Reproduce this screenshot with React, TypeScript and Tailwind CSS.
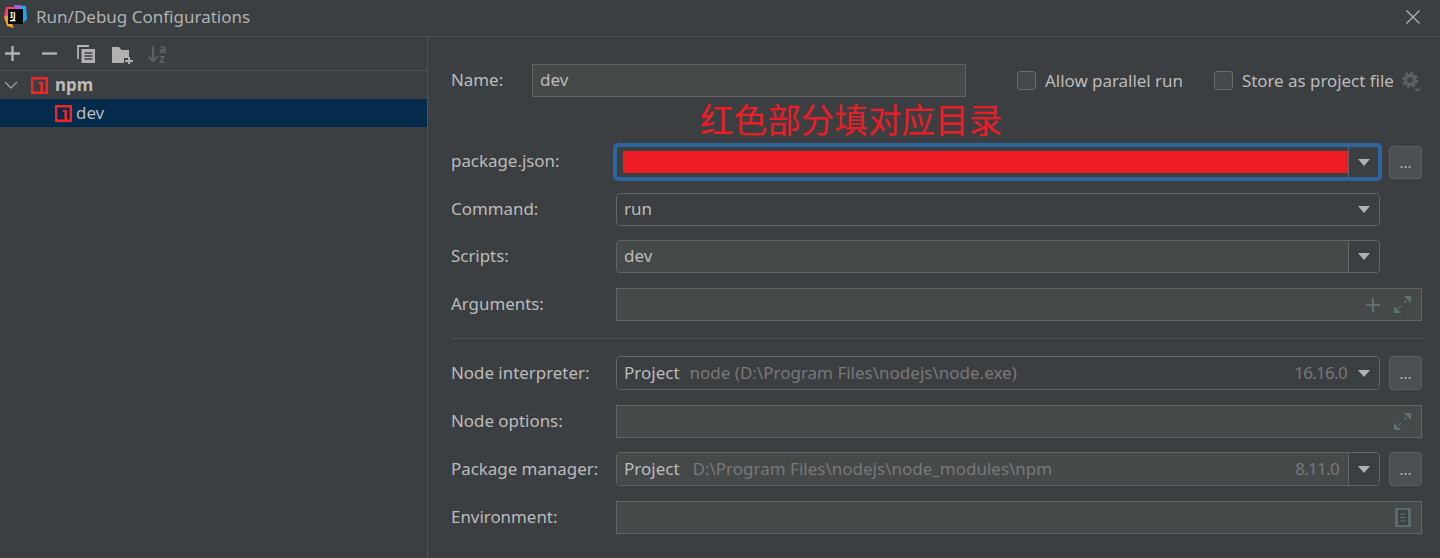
import type { ReactNode } from "react";

const FONT = "font-['Noto_Sans','Noto_Sans_CJK_SC',sans-serif]";

function NpmIcon({ className }: { className: string }) {
  return (
    <svg viewBox="0 0 17 17" className={className}>
      <path d="M1.200 1.200h14.600v14.600H1.200z" fill="none" stroke="#f2262a" strokeWidth="2.400" />
      <path d="M7.500 5H12v11H9.500V6.800h-2z" fill="#f2262a" />
    </svg>
  );
}

function Arrow() {
  return (
    <svg viewBox="0 0 12 7" className="w-[12px] h-[7px]">
      <path d="M0 0h12L6 7z" fill="#aeb0b2" />
    </svg>
  );
}

function Expand() {
  return (
    <svg viewBox="0 0 17 17" className="w-[17px] h-[17px]">
      <path d="M10 0h7v7zM0 10l7 7H0z" fill="#5f7073" />
      <path d="M12.500 4.500L10 7M4.500 12.500L7 10" stroke="#5f7073" strokeWidth="1.300" fill="none" />
    </svg>
  );
}

function Row({ label, mt, tall, children }: { label: string; mt: string; tall?: boolean; children: ReactNode }) {
  return (
    <div className={`flex items-center ${mt}`}>
      <div className={`w-[165px] shrink-0 text-[#bbbbbb] ${tall ? "" : "pb-[2px]"}`}>{label}</div>
      {children}
    </div>
  );
}

function Dots({ h, ml = "ml-[9px]" }: { h: string; ml?: string }) {
  return (
    <button className={`${ml} ${h} w-[33px] rounded-[4px] border border-[#5e6060] bg-[#4c5052] text-[#bbbbbb] text-[15px] leading-[28px] shrink-0`}>
      ...
    </button>
  );
}

function Combo({ children, split, tall }: { children?: ReactNode; split?: boolean; tall?: boolean }) {
  return (
    <div className={`w-[764px] ${tall ? "h-[34px]" : "h-[33px]"} flex border border-[#646464] rounded-[4px] overflow-hidden shrink-0`}>
      <div className={`flex-1 min-w-0 flex items-center pl-[7px] text-[17px] text-[#bbbbbb] ${tall ? "" : "pb-[2px]"} ${split ? "bg-[#45494a]" : "bg-[#3c3f41]"}`}>
        {children}
      </div>
      <div className={`w-[31px] flex items-center justify-center bg-[#3c3f41] ${split ? "border-l border-[#646464]" : ""}`}>
        <Arrow />
      </div>
    </div>
  );
}

function TextField({ children }: { children?: ReactNode }) {
  return (
    <div className="w-[806px] h-[33px] flex items-center justify-end gap-[14px] pr-[10px] border border-[#646464] bg-[#45494a] shrink-0">
      {children}
    </div>
  );
}

function Check({ label, cls }: { label: string; cls: string }) {
  return (
    <div className={`flex items-center gap-[9px] ${cls}`}>
      <span className="w-[19px] h-[19px] rounded-[3px] border border-[#6b6b6b] bg-[#43494a]" />
      <span className="text-[#bbbbbb]">{label}</span>
    </div>
  );
}

export default function App() {
  return (
    <div className={`w-[1440px] h-[558px] overflow-hidden bg-[#3c3f41] text-[16.900px] leading-[24px] ${FONT}`}>
      <div className="h-[37px] flex items-center border-b border-[#515151] pl-[4px] pr-[20px] pb-[2px]">
        <svg viewBox="0 0 23 23" className="w-[23px] h-[23px] mb-[2px]">
          <path d="M2 2h10L4 14 0 12z" fill="#fc3a6e" />
          <path d="M10 0l12 1 1 13-5 5z" fill="#1ea7e9" />
          <path d="M0 12l4-2 6 13-7-2z" fill="#f9a01b" />
          <path d="M10 1l8-1-6 8z" fill="#c74fe0" />
          <rect x="4" y="4" width="15" height="15" fill="#0a0a0a" />
          <text x="6" y="12.500" fontSize="8" fill="#ffffff" fontWeight="700">IJ</text>
          <rect x="6" y="15" width="5.500" height="1.300" fill="#ffffff" />
        </svg>
        <span className="ml-[9px] text-[17px] text-[#afb1b3]">Run/Debug Configurations</span>
        <svg viewBox="0 0 14 14" className="w-[14px] h-[14px] ml-auto" stroke="#b4b6b8" strokeWidth="1.200">
          <path d="M.5 .5l13 13M13.500 .5l-13 13" />
        </svg>
      </div>

      <div className="flex h-[521px]">
        <div className="w-[428px] shrink-0 border-r border-[#515151]">
          <div className="h-[34px] flex items-center border-b border-[#515151] pl-[5px]">
            <svg viewBox="0 0 15 15" className="w-[15px] h-[15px]">
              <path d="M0 7.500h15M7.500 0v15" stroke="#afb1b3" strokeWidth="2.400" />
            </svg>
            <svg viewBox="0 0 15 15" className="w-[15px] h-[15px] ml-[22px]">
              <path d="M0 7.500h15" stroke="#afb1b3" strokeWidth="2.400" />
            </svg>
            <svg viewBox="0 0 18 18" className="w-[18px] h-[18px] ml-[20px]" fill="none">
              <path d="M1 14V1h11" stroke="#afb1b3" strokeWidth="1.800" />
              <path d="M4.500 4H18v14H4.500z" fill="#afb1b3" />
              <path d="M7.500 8h8M7.500 11h8M7.500 14h8" stroke="#3c3f41" strokeWidth="1.300" />
            </svg>
            <svg viewBox="0 0 21 17" className="w-[21px] h-[17px] ml-[17px] mt-[3px]">
              <path d="M0 0h7l2.500 3H17v8h-5v5H0z" fill="#afb1b3" />
              <path d="M13 14h8M17 10v8" stroke="#afb1b3" strokeWidth="2.200" />
            </svg>
            <div className="ml-[15px] flex items-center">
              <svg viewBox="0 0 10 17" className="w-[10px] h-[17px] mt-[2px]" fill="none">
                <path d="M5 0v15M.7 10.500L5 15l4.300-4.500" stroke="#5f6264" strokeWidth="2" />
              </svg>
              <div className="flex flex-col ml-[1px] text-[12px] leading-[9.500px] font-bold text-[#5f6264]">
                <span>a</span>
                <span>z</span>
              </div>
            </div>
          </div>
          <div className="h-[28px] flex items-center pl-[4px]">
            <svg viewBox="0 0 14 8" className="w-[14px] h-[8px]" fill="none">
              <path d="M1 1l6 6 6-6" stroke="#9a9c9e" strokeWidth="1.400" />
            </svg>
            <NpmIcon className="w-[17px] h-[17px] ml-[13px]" />
            <span className="ml-[7px] pb-[1px] font-bold text-[#bbbbbb]">npm</span>
          </div>
          <div className="h-[28px] flex items-center bg-[#042a4c] pl-[55px]">
            <NpmIcon className="w-[17px] h-[17px]" />
            <span className="ml-[4px] pb-[1px] text-[#bbbbbb]">dev</span>
          </div>
        </div>

        <div className="flex-1 pl-[23px] pt-[27px]">
          <div className="flex items-center">
            <div className="w-[81px] pb-[2px] text-[#bbbbbb]">Name:</div>
            <div className="w-[434px] h-[33px] flex items-center pl-[7px] pb-[2px] border border-[#646464] bg-[#45494a] text-[17px] text-[#bbbbbb]">
              dev
            </div>
            <Check label="Allow parallel run" cls="ml-[51px]" />
            <Check label="Store as project file" cls="ml-[31px]" />
            <svg viewBox="0 0 20 20" className="w-[20px] h-[20px] ml-[8px] mt-[3px]" fill="none">
              <circle cx="8" cy="8" r="4.500" stroke="#5c5f61" strokeWidth="3.400" />
              <circle cx="8" cy="8" r="7" stroke="#5c5f61" strokeWidth="2.400" strokeDasharray="3.200 2.300" />
              <path d="M12 16.500h7l-3.500 3.500z" fill="#5c5f61" />
            </svg>
          </div>

          <div className="h-[46px] flex items-center pl-[249px] text-[33.600px] text-[#ee1c25] whitespace-nowrap">
            红色部分填对应目录
          </div>

          <div className="flex items-center">
            <div className="w-[162px] shrink-0 pb-[2px] text-[#bbbbbb]">package.json:</div>
            <div className="w-[769px] h-[38px] flex items-stretch border-[4px] border-[#2f659f] rounded-[5px] shrink-0 bg-[#3c3f41]">
              <div className="flex-1 my-[4px] ml-[6px] bg-[#ee1c25]" />
              <div className="w-[30px] flex items-center justify-center bg-[#3c3f41] border-l border-[#646464]">
                <Arrow />
              </div>
            </div>
            <Dots h="h-[33px]" ml="ml-[7px]" />
          </div>

          <Row label="Command:" mt="mt-[12px]">
            <Combo>run</Combo>
          </Row>
          <Row label="Scripts:" mt="mt-[14px]">
            <Combo split>dev</Combo>
          </Row>
          <Row label="Arguments:" mt="mt-[15px]">
            <TextField>
              <svg viewBox="0 0 14 14" className="w-[14px] h-[14px]">
                <path d="M0 7h14M7 0v14" stroke="#5f7073" strokeWidth="2.200" />
              </svg>
              <Expand />
            </TextField>
          </Row>

          <div className="mt-[17px] border-t border-[#515151] mr-[14px]" />

          <Row label="Node interpreter:" mt="mt-[17px]" tall>
            <Combo tall>
              <span>Project</span>
              <span className="ml-[10px] text-[#787878]">node (D:\Program Files\nodejs\node.exe)</span>
              <span className="ml-auto mr-[1px] tracking-[-0.700px] text-[#787878]">16.16.0</span>
            </Combo>
            <Dots h="h-[34px]" />
          </Row>
          <Row label="Node options:" mt="mt-[15px]">
            <TextField>
              <Expand />
            </TextField>
          </Row>
          <Row label="Package manager:" mt="mt-[14px]" tall>
            <Combo split tall>
              <span>Project</span>
              <span className="ml-[13px] text-[#787878]">D:\Program Files\nodejs\node_modules\npm</span>
              <span className="ml-auto mr-[9px] tracking-[-0.700px] text-[#787878]">8.11.0</span>
            </Combo>
            <Dots h="h-[34px]" />
          </Row>
          <Row label="Environment:" mt="mt-[15px]">
            <TextField>
              <svg viewBox="0 0 16 19" className="w-[16px] h-[19px]">
                <path d="M0 0h16v19H0z" fill="#5d6a6d" />
                <path d="M3 2h10v15H3z" fill="#3c4142" />
                <path d="M5 6h6M5 9.500h6M5 13h6" stroke="#5f7073" strokeWidth="1.200" />
              </svg>
            </TextField>
          </Row>
        </div>
      </div>
    </div>
  );
}
